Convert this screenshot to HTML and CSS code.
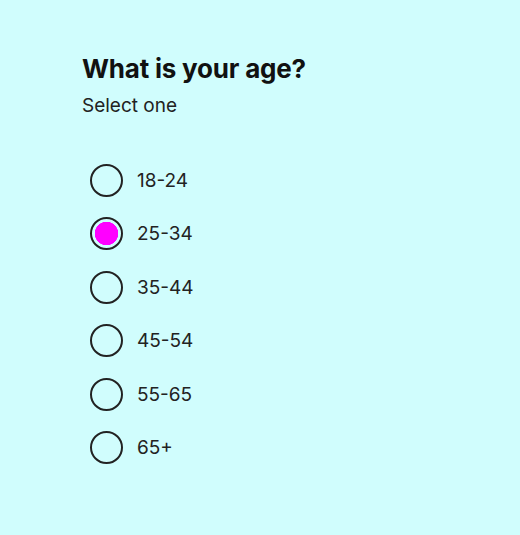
FILE: index.html
```html
<!DOCTYPE html>
<html>
<head>
<meta charset="utf-8">
<link rel="stylesheet" href="styles.css">
</head>
<body>
<main class="survey">
  <h1 class="title">What is your age?</h1>
  <p class="subtitle">Select one</p>
  <ul class="options">
    <li class="option"><span class="radio"></span><span class="label">18-24</span></li>
    <li class="option"><span class="radio checked"></span><span class="label">25-34</span></li>
    <li class="option"><span class="radio"></span><span class="label">35-44</span></li>
    <li class="option"><span class="radio"></span><span class="label">45-54</span></li>
    <li class="option"><span class="radio"></span><span class="label">55-65</span></li>
    <li class="option"><span class="radio"></span><span class="label">65+</span></li>
  </ul>
</main>
</body>
</html>
```

FILE: styles.css
```css
html, body {
  margin: 0;
  padding: 0;
  background: #d0fdfd;
}
body {
  font-family: "Inter", "Lato", "Liberation Sans", sans-serif;
  color: #111;
  height: 535px;
}
.survey {
  padding: 52px 0 0 82px;
}
.title {
  margin: 0;
  font-size: 26px;
  font-weight: 700;
  line-height: 34px;
  letter-spacing: -0.2px;
}
.subtitle {
  margin: 8px 0 0 0;
  font-size: 19px;
  line-height: 24px;
  color: #222;
}
.options {
  list-style: none;
  margin: 46px 0 0 8px;
  padding: 0;
  display: flex;
  flex-direction: column;
  gap: 20.4px;
}
.option {
  display: flex;
  align-items: center;
  gap: 14px;
  height: 33px;
}
.radio {
  box-sizing: border-box;
  width: 33px;
  height: 33px;
  border: 2px solid #222;
  border-radius: 50%;
  flex: none;
}
.radio.checked {
  background: radial-gradient(circle, #ff00ff 0 11.5px, transparent 12px);
}
.label {
  font-size: 19px;
  color: #222;
}
```
